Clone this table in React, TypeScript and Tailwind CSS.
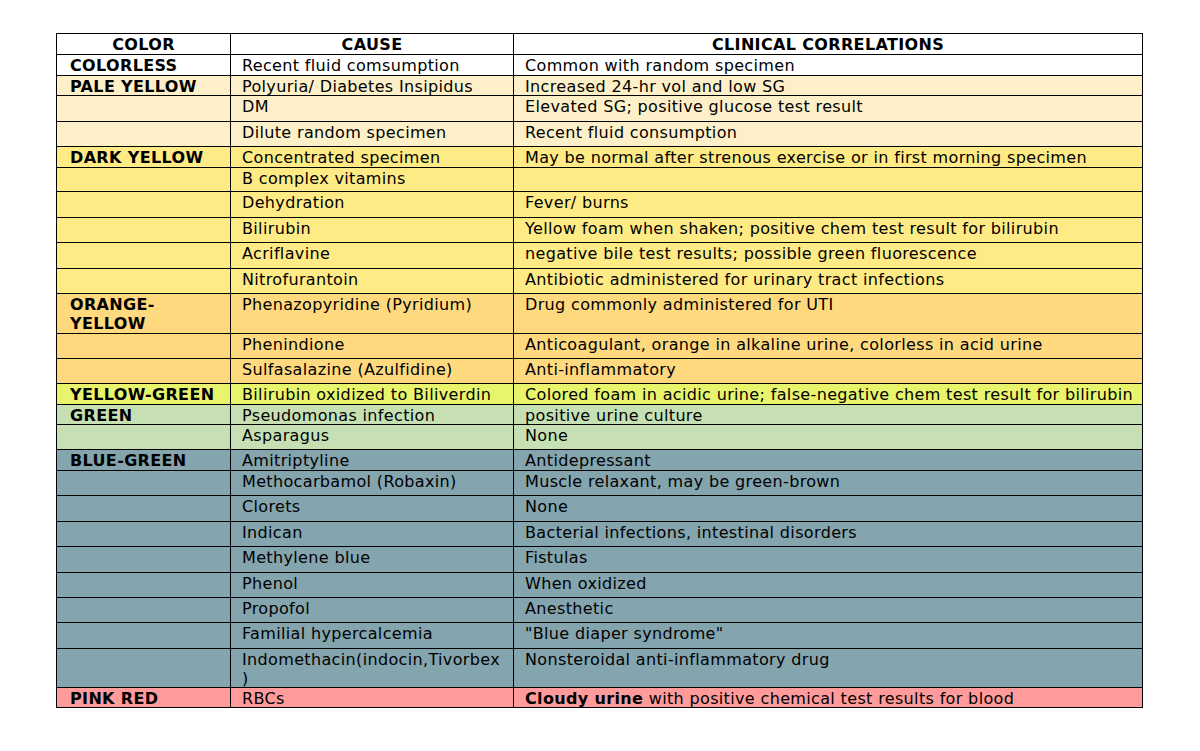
import React from 'react'

type Row = {
  color?: React.ReactNode
  cause: React.ReactNode
  clinical: React.ReactNode
  h: string
  bg: string
}

const PALE = 'bg-[#fdf0c9]'
const DARK = 'bg-[#ffeb85]'
const ORANGE = 'bg-[#fed97e]'
const LIME = 'bg-[#e8f46c]'
const GREEN = 'bg-[#c6e0b4]'
const BLUE = 'bg-[#84a4ae]'
const PINK = 'bg-[#ff9b9b]'

const rows: Row[] = [
  { color: 'COLORLESS', cause: 'Recent fluid comsumption', clinical: 'Common with random specimen', h: 'h-[21px]', bg: 'bg-white' },
  { color: 'PALE YELLOW', cause: 'Polyuria/ Diabetes Insipidus', clinical: 'Increased 24-hr vol and low SG', h: 'h-[20px]', bg: PALE },
  { cause: 'DM', clinical: 'Elevated SG; positive glucose test result', h: 'h-[26px]', bg: PALE },
  { cause: 'Dilute random specimen', clinical: 'Recent fluid consumption', h: 'h-[25px]', bg: PALE },
  { color: 'DARK YELLOW', cause: 'Concentrated specimen', clinical: 'May be normal after strenous exercise or in first morning specimen', h: 'h-[21px]', bg: DARK },
  { cause: 'B complex vitamins', clinical: '', h: 'h-[24px]', bg: DARK },
  { cause: 'Dehydration', clinical: 'Fever/ burns', h: 'h-[26px]', bg: DARK },
  { cause: 'Bilirubin', clinical: 'Yellow foam when shaken; positive chem test result for bilirubin', h: 'h-[25px]', bg: DARK },
  { cause: 'Acriflavine', clinical: 'negative bile test results; possible green fluorescence', h: 'h-[26px]', bg: DARK },
  { cause: 'Nitrofurantoin', clinical: 'Antibiotic administered for urinary tract infections', h: 'h-[25px]', bg: DARK },
  {
    color: (
      <>
        ORANGE-
        <br />
        YELLOW
      </>
    ),
    cause: 'Phenazopyridine (Pyridium)',
    clinical: 'Drug commonly administered for UTI',
    h: 'h-[40px]',
    bg: ORANGE,
  },
  { cause: 'Phenindione', clinical: 'Anticoagulant, orange in alkaline urine, colorless in acid urine', h: 'h-[25px]', bg: ORANGE },
  { cause: 'Sulfasalazine (Azulfidine)', clinical: 'Anti-inflammatory', h: 'h-[25px]', bg: ORANGE },
  { color: 'YELLOW-GREEN', cause: 'Bilirubin oxidized to Biliverdin', clinical: 'Colored foam in acidic urine; false-negative chem test result for bilirubin', h: 'h-[21px]', bg: LIME },
  { color: 'GREEN', cause: 'Pseudomonas infection', clinical: 'positive urine culture', h: 'h-[20px]', bg: GREEN },
  { cause: 'Asparagus', clinical: 'None', h: 'h-[25px]', bg: GREEN },
  { color: 'BLUE-GREEN', cause: 'Amitriptyline', clinical: 'Antidepressant', h: 'h-[21px]', bg: BLUE },
  { cause: 'Methocarbamol (Robaxin)', clinical: 'Muscle relaxant, may be green-brown', h: 'h-[25px]', bg: BLUE },
  { cause: 'Clorets', clinical: 'None', h: 'h-[26px]', bg: BLUE },
  { cause: 'Indican', clinical: 'Bacterial infections, intestinal disorders', h: 'h-[25px]', bg: BLUE },
  { cause: 'Methylene blue', clinical: 'Fistulas', h: 'h-[26px]', bg: BLUE },
  { cause: 'Phenol', clinical: 'When oxidized', h: 'h-[25px]', bg: BLUE },
  { cause: 'Propofol', clinical: 'Anesthetic', h: 'h-[25px]', bg: BLUE },
  { cause: 'Familial hypercalcemia', clinical: '"Blue diaper syndrome"', h: 'h-[26px]', bg: BLUE },
  {
    cause: (
      <>
        Indomethacin(indocin,Tivorbex
        <br />)
      </>
    ),
    clinical: 'Nonsteroidal anti-inflammatory drug',
    h: 'h-[39px]',
    bg: BLUE,
  },
  {
    color: 'PINK RED',
    cause: 'RBCs',
    clinical: (
      <>
        <b>Cloudy urine</b> with positive chemical test results for blood
      </>
    ),
    h: 'h-[20px]',
    bg: PINK,
  },
]

const cell = 'border border-black align-top p-0 leading-[19px]'

// nudges text down a pixel without growing the row
const Txt = ({ children }: { children?: React.ReactNode }) => (
  <div className="-mb-[1px] pt-[1px]">{children}</div>
)

export default function App() {
  return (
    <div className="min-h-[751px] w-[1200px] bg-white pl-[56px] pt-[33px] font-['DejaVu_Sans',Verdana,sans-serif] text-[16px] tracking-[0.35px] text-black">
      <table className="w-[1086px] table-fixed border-collapse">
        <colgroup>
          <col className="w-[174px]" />
          <col className="w-[283px]" />
          <col className="w-[629px]" />
        </colgroup>
        <thead>
          <tr className="h-[21px] bg-white">
            <th className={`${cell} text-center font-bold`}>
              <Txt>COLOR</Txt>
            </th>
            <th className={`${cell} text-center font-bold`}>
              <Txt>CAUSE</Txt>
            </th>
            <th className={`${cell} text-center font-bold`}>
              <Txt>CLINICAL CORRELATIONS</Txt>
            </th>
          </tr>
        </thead>
        <tbody>
          {rows.map((r, i) => (
            <tr key={i} className={`${r.h} ${r.bg}`}>
              <td className={`${cell} pl-[13px] font-bold`}>
                <Txt>{r.color}</Txt>
              </td>
              <td className={`${cell} pl-[11px]`}>
                <Txt>{r.cause}</Txt>
              </td>
              <td className={`${cell} pl-[11px]`}>
                <Txt>{r.clinical}</Txt>
              </td>
            </tr>
          ))}
        </tbody>
      </table>
    </div>
  )
}
